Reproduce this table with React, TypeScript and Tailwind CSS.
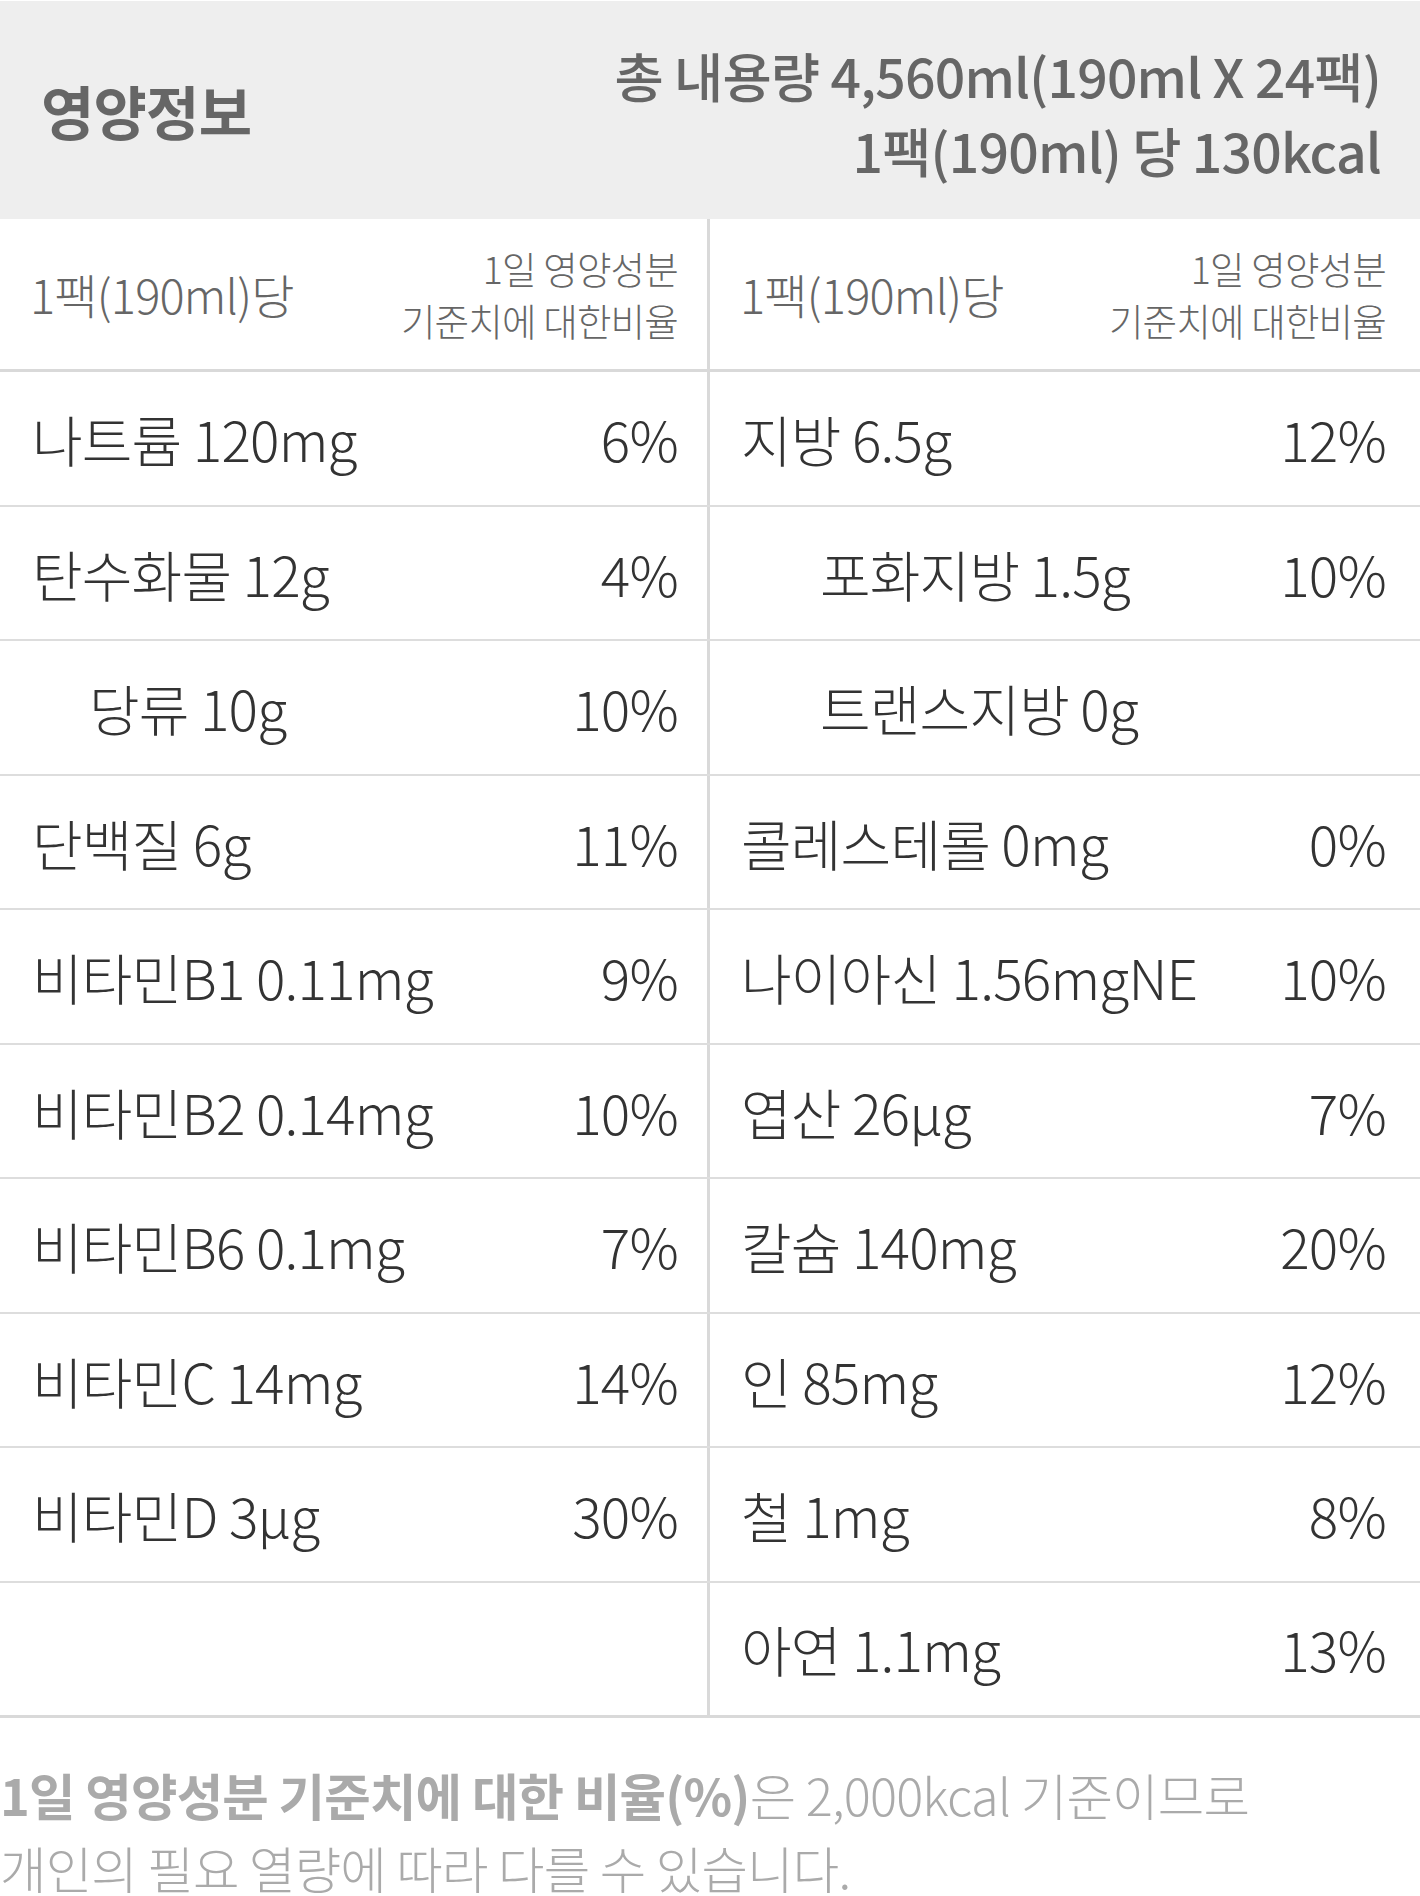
const FONT = { fontFamily: '"Noto Sans CJK KR", "Noto Sans", sans-serif' };

type Cell = { name: string; pct?: string; indent?: boolean } | null;

const ROWS: [Cell, Cell][] = [
  [{ name: "나트륨 120mg", pct: "6%" }, { name: "지방 6.5g", pct: "12%" }],
  [{ name: "탄수화물 12g", pct: "4%" }, { name: "포화지방 1.5g", pct: "10%", indent: true }],
  [{ name: "당류 10g", pct: "10%", indent: true }, { name: "트랜스지방 0g", indent: true }],
  [{ name: "단백질 6g", pct: "11%" }, { name: "콜레스테롤 0mg", pct: "0%" }],
  [{ name: "비타민B1 0.11mg", pct: "9%" }, { name: "나이아신 1.56mgNE", pct: "10%" }],
  [{ name: "비타민B2 0.14mg", pct: "10%" }, { name: "엽산 26μg", pct: "7%" }],
  [{ name: "비타민B6 0.1mg", pct: "7%" }, { name: "칼슘 140mg", pct: "20%" }],
  [{ name: "비타민C 14mg", pct: "14%" }, { name: "인 85mg", pct: "12%" }],
  [{ name: "비타민D 3μg", pct: "30%" }, { name: "철 1mg", pct: "8%" }],
  [null, { name: "아연 1.1mg", pct: "13%" }],
];

function NutrientCell({ cell, right }: { cell: Cell; right?: boolean }) {
  return (
    <div
      className={
        right
          ? "flex items-center justify-between pl-[31px] pr-[34px]"
          : "flex items-center justify-between pl-[32px] pr-[29px] border-r-[3px] border-[#d9d9d9]"
      }
    >
      {cell && (
        <>
          <span className={cell.indent ? (right ? "pl-[79px]" : "pl-[57px]") : ""}>{cell.name}</span>
          <span>{cell.pct}</span>
        </>
      )}
    </div>
  );
}

function SubHeaderCell({ right }: { right?: boolean }) {
  return (
    <div
      className={
        right
          ? "flex items-center justify-between pl-[30px] pr-[34px]"
          : "flex items-center justify-between pl-[30px] pr-[29px] border-r-[3px] border-[#d9d9d9]"
      }
    >
      <span className="text-[47px]">1팩(190ml)당</span>
      <span className="text-right text-[37.5px] leading-[52px]">
        1일 영양성분
        <br />
        기준치에 대한비율
      </span>
    </div>
  );
}

export default function App() {
  return (
    <div className="w-[1420px] bg-white tracking-[-0.05em]" style={FONT}>
      <div className="mt-[1px] flex h-[218px] items-center justify-between bg-[#eeeeee] pl-[41px] pr-[39px] text-[#666666]">
        <h1 className="text-[58px] font-bold">영양정보</h1>
        <div className="pt-[4px] text-right text-[53.5px] font-medium leading-[75px]">
          <p>총 내용량 4,560ml(190ml X 24팩)</p>
          <p>1팩(190ml) 당 130kcal</p>
        </div>
      </div>

      <div className="grid h-[153px] grid-cols-2 border-b-[3px] border-[#d9d9d9] font-light text-[#666666]">
        <SubHeaderCell />
        <SubHeaderCell right />
      </div>

      <div className="font-light text-[55px] text-[#333333]">
        {ROWS.map(([l, r], i) => (
          <div
            key={i}
            className={
              i === ROWS.length - 1
                ? "grid h-[135px] grid-cols-2 border-b-[3px] border-[#d9d9d9]"
                : "grid h-[134.5px] grid-cols-2 border-b-2 border-[#dddddd]"
            }
          >
            <NutrientCell cell={l} />
            <NutrientCell cell={r} right />
          </div>
        ))}
      </div>

      <div className="pt-[40px] text-[50.5px] font-light leading-[73px] text-[#aaaaaa]">
        <p>
          <span className="font-bold">1일 영양성분 기준치에 대한 비율(%)</span>은 2,000kcal 기준이므로
        </p>
        <p>개인의 필요 열량에 따라 다를 수 있습니다.</p>
      </div>
    </div>
  );
}
